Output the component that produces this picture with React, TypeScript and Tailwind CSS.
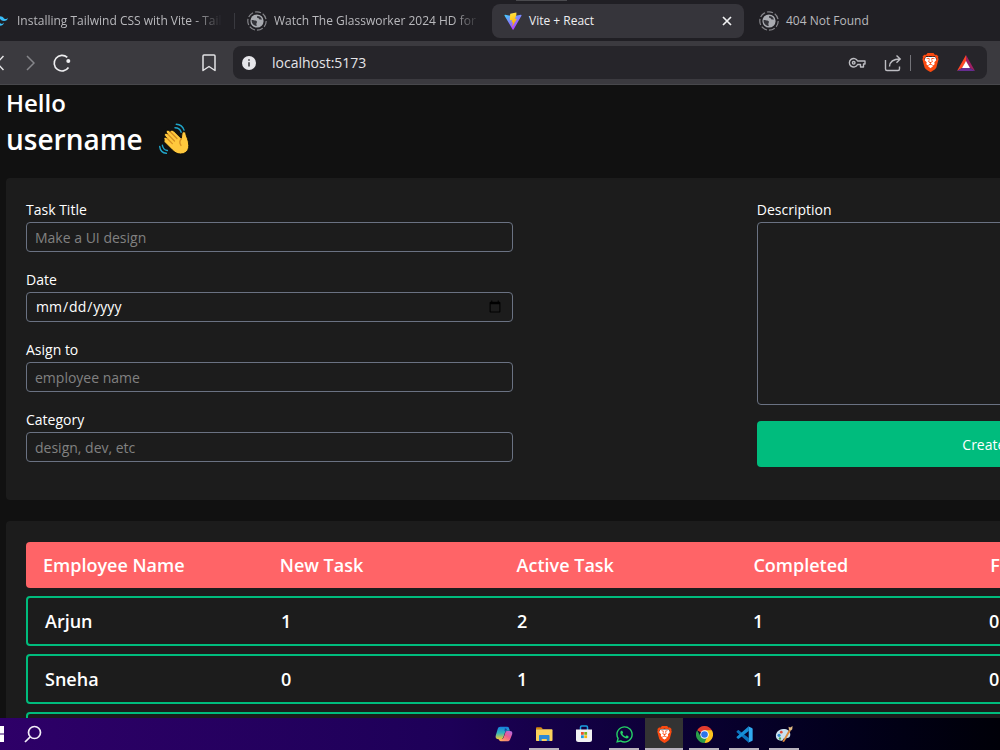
import { useState } from 'react';
import type { ReactNode } from 'react';
import { SiBrave, SiTailwindcss } from 'react-icons/si';
import { FaWhatsapp } from 'react-icons/fa';

type Employee = { name: string; newTask: number; active: number; completed: number; failed: number };

const employees: Employee[] = [
  { name: 'Arjun', newTask: 1, active: 2, completed: 1, failed: 0 },
  { name: 'Sneha', newTask: 0, active: 1, completed: 1, failed: 0 },
  { name: 'Ravi', newTask: 1, active: 1, completed: 1, failed: 0 },
];

const fieldClass = 'block h-[30px] w-full rounded border border-[#6a7282] bg-transparent px-2 text-sm text-white outline-none placeholder:text-[#818181]';

function GlobeIcon() {
  return (
    <svg viewBox="0 0 20 20" className="size-5 shrink-0" fill="none">
      <circle cx="10" cy="10" r="9.2" stroke="#85858a" strokeWidth="1.2" strokeDasharray="6.2 2" />
      <circle cx="10" cy="10" r="6.6" fill="#a9abb1" />
      <path d="M4.600 9c1.800 0 2.800.4 3.800.6 1.600.4 2 1.200 1.200 2.400-.4.800-.2 1.600.2 3-2.900 0-5.500-2.500-5.200-6zM10.500 5c-1 .8-.5 1.800.6 2 .9.2.8 1.200 1.700 1.500 1 .3 1.300-.2 2.200.2-.5-2-2.200-3.700-4.500-3.700z" fill="#34343a" />
    </svg>
  );
}

function ViteIcon() {
  return (
    <svg viewBox="0 0 32 32" className="size-[18px] shrink-0">
      <defs>
        <linearGradient id="viteBody" x1="0" y1="0" x2="0.6" y2="1">
          <stop offset="0" stopColor="#41d1ff" />
          <stop offset="1" stopColor="#bd34fe" />
        </linearGradient>
        <linearGradient id="viteBolt" x1="0" y1="0" x2="0.2" y2="1">
          <stop offset="0" stopColor="#ffea83" />
          <stop offset="0.2" stopColor="#ffdd35" />
          <stop offset="1" stopColor="#ffa800" />
        </linearGradient>
      </defs>
      <path d="M31 6.500 17 31a1 1 0 0 1-1.700 0L1 6.500A1 1 0 0 1 2 5l14 2.500L30 5a1 1 0 0 1 1 1.500z" fill="url(#viteBody)" />
      <path d="M22 1 11 3l-.7 12 4-.7-.9 4.300 2.500-.6-1.500 8.500L23 12l-3.500.6L22 5z" fill="url(#viteBolt)" />
    </svg>
  );
}

function BraveIcon({ className }: { className: string }) {
  return (
    <svg viewBox="0 0 24 24" className={className}>
      <path d="M6 5h12l2 5-2 7-6 4-6-4-2-7z" fill="#fff" />
      <SiBrave size={24} color="#fb4a10" />
    </svg>
  );
}

function WaveIcon() {
  return (
    <svg viewBox="0 0 36 36" className="size-8 shrink-0">
      <g transform="translate(-1 0)">
        <path d="M7.200 19.300c-1.900-2 .4-4.300 2.400-2.600l-1.700-1.800c-1.900-2.200.6-4.600 2.700-2.600l-.9-1c-1.700-2.200.9-4.400 2.900-2.500l1.100 1.100c.3-2.300 2.600-2.300 4.200-.7l8.300 8.300c.5-2.200.1-4.200.8-6.200.8-2.200 4-1.800 4.200.8.1 2.200 3.300 7.200 3.300 13.200 0 6.400-4.300 9.500-9.300 9.500-4 0-6.500-1.700-9.200-4.400l-8.600-8.600c-1.300-1.300-.8-2.600-.2-2.500z" fill="#ffc83d" stroke="#080808" strokeWidth="1" />
        <path d="m10 17.200 6 6M10.800 12.500l7.600 7.700M13.900 10.200l7.300 7.300M26.300 17.800c-2 2-2.300 5-.6 7.500" fill="none" stroke="#d58e21" strokeWidth="1.500" strokeLinecap="round" />
        <path d="M19 5.300c3 0 6 2 7 5M20.500 1.500c4 .3 7.500 3 8.700 6.500M4.800 25c.4 3 2.800 5.400 5.600 6M1.800 26.500c.5 4.200 3.700 7.200 7.500 7.600" fill="none" stroke="#20a5c9" strokeWidth="1.600" strokeLinecap="round" />
      </g>
    </svg>
  );
}

function CopilotIcon() {
  return (
    <svg viewBox="0 0 20 20" className="size-[18px]">
      <defs>
        <linearGradient id="coLeft" x1="0" y1="0" x2="0" y2="1">
          <stop offset="0" stopColor="#1680df" />
          <stop offset="0.5" stopColor="#32b5bc" />
          <stop offset="1" stopColor="#f2c936" />
        </linearGradient>
        <linearGradient id="coRight" x1="1" y1="0" x2="0.2" y2="1">
          <stop offset="0" stopColor="#ad6bec" />
          <stop offset="0.5" stopColor="#ee5c8b" />
          <stop offset="1" stopColor="#ffad60" />
        </linearGradient>
      </defs>
      <path d="M6 2h7.500c1.500 0 2 1 2.400 2.500l.6 2h-3c-1.500 0-2 .8-2.500 2.200l-1.700 5c-.4 1.300-1.200 2-2.600 2H3.500C1 15.700.2 14 .9 11.500L3 4.500C3.500 3 4.300 2 6 2z" fill="url(#coLeft)" />
      <path d="M14 18H6.500C5 18 4.500 17 4.100 15.600h3c1.400 0 2.200-.8 2.600-2l1.700-5c.5-1.500 1.200-2.200 2.600-2h2.600c2.500 0 3 1.700 2.400 4L17 15.500c-.5 1.600-1.400 2.500-3 2.500z" fill="url(#coRight)" />
      <path d="M11 3.500c1.500 0 2 .8 2.400 2.300l-2.800 1z" fill="#173eaa" />
    </svg>
  );
}

function FolderIcon() {
  return (
    <svg viewBox="0 0 18 18" className="size-[18px]">
      <path d="M1 3.500c0-.8.500-1.300 1.200-1.300h4l1.800 2H1z" fill="#d88b0b" />
      <path d="M1 4.200h15.500c.5 0 1 .4 1 1V15c0 .6-.5 1-1 1H2c-.6 0-1-.4-1-1z" fill="#fbd15b" />
      <path d="M4 16v-5c0-.6.400-1 1-1h8.500c.6 0 1 .4 1 1v5h-2.700v-2H6.700v2z" fill="#2b8ad4" />
    </svg>
  );
}

function StoreIcon() {
  return (
    <svg viewBox="0 0 18 18" className="size-[18px]">
      <path d="M5.500 5V2.200c0-.7.400-1.200 1.200-1.200h4.600c.8 0 1.200.5 1.200 1.200V5" fill="none" stroke="#1ba0e1" strokeWidth="1.500" />
      <path d="M1 4.500h16v10c0 1.700-.8 2.500-2.500 2.500h-11C1.800 17 1 16.200 1 14.500z" fill="#f1f1f3" />
      <path d="M6 7h2.800v2.800H6z" fill="#e9512d" />
      <path d="M9.300 7h2.800v2.800H9.300z" fill="#7ab51d" />
      <path d="M6 10.300h2.800v2.800H6z" fill="#1c9be0" />
      <path d="M9.300 10.300h2.800v2.800H9.300z" fill="#f7b70b" />
    </svg>
  );
}

function ChromeIcon() {
  return (
    <svg viewBox="0 0 24 24" className="size-[17px]">
      <path d="M12 12 1.600 6A12 12 0 0 1 22.400 6z" fill="#e33b2e" />
      <path d="M12 12 22.400 6A12 12 0 0 1 12 24l-1-6z" fill="#fcc31e" />
      <path d="M12 24A12 12 0 0 1 1.600 6l5.200 9L15 17z" fill="#2a9e49" />
      <path d="M12 6h10.400l-5.200 9z" fill="#fcc31e" />
      <circle cx="12" cy="12" r="6" fill="#fff" />
      <circle cx="12" cy="12" r="4.700" fill="#2c73e8" />
    </svg>
  );
}

function CodeIcon() {
  return (
    <svg viewBox="0 0 24 24" className="size-[17px]">
      <path d="M1 7.500 2.600 6c.4-.3.900-.3 1.300 0L18 17v6.500L1 8.700c-.4-.4-.4-.9 0-1.200z" fill="#0a72bd" />
      <path d="M1 16.500 2.600 18c.4.3.9.300 1.300 0L18 7V.5L1 15.300c-.4.4-.4.900 0 1.200z" fill="#178fd6" />
      <path d="m17 .3 5.500 2.500c.6.300 1 .9 1 1.600v15.200c0 .7-.4 1.300-1 1.600L17 23.700c.6-.4 1-.8 1-1.700V2c0-.9-.4-1.300-1-1.700z" fill="#30aaf0" />
    </svg>
  );
}

function PaintIcon() {
  return (
    <svg viewBox="0 0 20 20" className="size-[18px]">
      <path d="M9 4.500C4 5 1 8.500 1 12c0 3 2 5.500 6 5.500 2.500 0 1.500-2.500 3.500-2.800 2.500-.3 6.500.3 6.500-4.200 0-4-4-6.300-8-6z" fill="#c9e0ee" />
      <circle cx="4.500" cy="11.500" r="1.700" fill="#2f88cd" />
      <circle cx="7" cy="8" r="1.500" fill="#df4b36" />
      <circle cx="5.500" cy="15" r="1.300" fill="#4ca64d" />
      <path d="m8.500 17.800 7-12.500 2 1-7 12c-1 1-2.500.5-2-.5z" fill="#d9883b" />
      <path d="M15.500 5.300 15 2l2 .8L19.500 1l-.3 3.700-1.700 1.600z" fill="#e4bd83" />
    </svg>
  );
}

function Tab({ icon, title, fade }: { icon: ReactNode; title: string; fade?: boolean }) {
  return (
    <button className={`flex min-w-0 flex-1 items-center gap-[7px] overflow-hidden text-left ${fade ? '[mask-image:linear-gradient(to_right,black_88%,transparent)]' : ''}`}>
      {icon}
      <span className="whitespace-nowrap">{title}</span>
    </button>
  );
}

function TabStrip() {
  return (
    <div className="flex h-[41px] shrink-0 items-center overflow-hidden bg-[#201f24] text-xs text-[#b9b9bd]">
      <div className="-ml-2 flex w-[230px] shrink-0">
        <Tab icon={<SiTailwindcss className="mr-0.5 size-4 shrink-0 text-[#38bdf8]" />} title="Installing Tailwind CSS with Vite - Tailwind CSS" fade />
      </div>
      <div className="ml-3 h-4 w-px shrink-0 bg-[#39393f]" />
      <div className="ml-3 flex w-[233px] shrink-0">
        <Tab icon={<GlobeIcon />} title="Watch The Glassworker 2024 HD for free" fade />
      </div>
      <div className="ml-3 flex h-full w-[252px] shrink-0 flex-col">
        <div className="ml-6 h-px w-[51px] bg-[#4a4a4e]" />
        <div className="mt-[3px] flex h-[34px] items-center rounded-lg bg-[#36353b] pr-[9px] pl-3 text-[#eeeef0]">
          <Tab icon={<ViteIcon />} title="Vite + React" />
          <button aria-label="Close tab" className="flex size-4 items-center justify-center">
            <svg viewBox="0 0 10 10" className="size-[10px]" stroke="#f0f0f2" strokeWidth="1.700">
              <path d="m1 1 8 8M9 1 1 9" />
            </svg>
          </button>
        </div>
      </div>
      <div className="ml-[15px] flex min-w-0 flex-1">
        <Tab icon={<GlobeIcon />} title="404 Not Found" />
      </div>
    </div>
  );
}

function Toolbar() {
  return (
    <div className="flex h-11 shrink-0 items-center overflow-hidden border-b border-[#48484c] bg-[#3b3a3f] pr-[13px]">
      <button aria-label="Back" className="-ml-1 w-2">
        <svg viewBox="0 0 8 16" className="h-4 w-2" fill="none" stroke="#e8e8ea" strokeWidth="1.500">
          <path d="M7.500 1 1 8l6.500 7" />
        </svg>
      </button>
      <button aria-label="Forward" className="ml-[22px]">
        <svg viewBox="0 0 9 16" className="h-4 w-[9px]" fill="none" stroke="#86868b" strokeWidth="1.500">
          <path d="m1 1 7 7-7 7" />
        </svg>
      </button>
      <button aria-label="Reload" className="ml-[17px]">
        <svg viewBox="0 0 20 20" className="size-5" fill="none" stroke="#eeeef0" strokeWidth="1.600">
          <path d="M15.300 4.400A7.800 7.800 0 1 0 16.500 14.500" />
          <circle cx="16.300" cy="8" r="2" fill="#eeeef0" stroke="none" />
        </svg>
      </button>
      <button aria-label="Bookmark" className="ml-[130px]">
        <svg viewBox="0 0 14 18" className="h-[18px] w-[14px]" fill="none" stroke="#e2e2e5" strokeWidth="1.500">
          <path d="M2 1h10c.6 0 1 .4 1 1v14.500l-6-4-6 4V2c0-.6.400-1 1-1z" strokeLinejoin="round" />
        </svg>
      </button>
      <div className="ml-[17px] flex h-[33px] min-w-0 flex-1 items-center rounded-lg bg-[#26252a] pr-3 pl-[9px]">
        <svg viewBox="0 0 16 16" className="size-[14px] shrink-0">
          <circle cx="8" cy="8" r="8" fill="#e6e6ea" />
          <path d="M8 3.800v1.700M8 7v5" stroke="#26252a" strokeWidth="1.600" />
        </svg>
        <input aria-label="Address" defaultValue="localhost:5173" className="ml-4 min-w-0 flex-1 bg-transparent text-sm text-[#e4e4e8] outline-none" />
        <button aria-label="Passwords">
          <svg viewBox="0 0 18 12" className="h-3 w-[18px]" fill="none" stroke="#bdbdc2" strokeWidth="1.400">
            <path d="M9.600 4h7.400v3h-1.500v3h-3V7.500H9.600A4.300 4.300 0 1 1 9.600 4z" strokeLinejoin="round" />
            <circle cx="5.700" cy="5.800" r="1.300" />
          </svg>
        </button>
        <button aria-label="Share" className="ml-[18px]">
          <svg viewBox="0 0 18 18" className="size-[18px]" fill="none" stroke="#bdbdc2" strokeWidth="1.400">
            <path d="M1.500 6v9c0 1 .5 1.500 1.500 1.500h11c1 0 1.500-.5 1.500-1.500v-2.500M5.500 12.500c.3-4.500 3.500-7.500 10.500-7.500M12.500 1.500 16.200 5l-3.700 3.700" />
          </svg>
        </button>
        <div className="mx-2 h-4 w-px bg-[#747479]" />
        <button aria-label="Brave Shields" className="ml-0.5">
          <BraveIcon className="size-[19px]" />
        </button>
        <button aria-label="Brave Rewards" className="ml-[17px]">
          <svg viewBox="0 0 18 16" className="h-4 w-[18px]">
            <path d="M9 0 0 16l5-3 4-6.500z" fill="#ff4724" />
            <path d="m9 0 9 16-5-3-4-6.500z" fill="#9e1f63" />
            <path d="M0 16h18l-5-3H5z" fill="#662d91" />
            <path d="m9 6 4 7H5z" fill="#fff" />
          </svg>
        </button>
      </div>
    </div>
  );
}

function CreateTask() {
  const [title, setTitle] = useState('');
  const [assignee, setAssignee] = useState('');
  const [category, setCategory] = useState('');

  return (
    <form onSubmit={(e) => e.preventDefault()} className="mt-[21px] flex justify-between rounded bg-[#1c1c1c] px-5 pt-5 pb-[22px]">
      <div className="w-2/5">
        <div className="mb-4">
          <label htmlFor="title" className="block">Task Title</label>
          <input id="title" value={title} onChange={(e) => setTitle(e.target.value)} placeholder="Make a UI design" className={fieldClass} />
        </div>
        <div className="mb-4">
          <label htmlFor="date" className="block">Date</label>
          <input id="date" type="date" className={fieldClass} />
        </div>
        <div className="mb-4">
          <label htmlFor="assignee" className="block">Asign to</label>
          <input id="assignee" value={assignee} onChange={(e) => setAssignee(e.target.value)} placeholder="employee name" className={fieldClass} />
        </div>
        <div className="mb-4">
          <label htmlFor="category" className="block">Category</label>
          <input id="category" value={category} onChange={(e) => setCategory(e.target.value)} placeholder="design, dev, etc" className={fieldClass} />
        </div>
      </div>
      <div className="w-2/5">
        <label htmlFor="description" className="block">Description</label>
        <textarea id="description" className="block h-[183px] w-full resize-none rounded border border-[#6a7282] bg-transparent px-2 py-1 outline-none" />
        <button type="submit" className="mt-4 block h-[46px] w-full rounded bg-[#00bc7d] pt-0.5">Create Task</button>
      </div>
    </form>
  );
}

function AllTasks() {
  return (
    <div className="mt-[21px] rounded bg-[#1c1c1c] px-5 py-[21px]">
      <table className="block text-left text-[18px] leading-7 font-semibold">
        <thead className="block">
          <tr className="mb-2 grid grid-cols-5 rounded bg-[#ff6467] px-[17px] py-[9px]">
            <th className="font-semibold">Employee Name</th>
            <th className="font-semibold">New Task</th>
            <th className="font-semibold">Active Task</th>
            <th className="font-semibold">Completed</th>
            <th className="font-semibold">Failed</th>
          </tr>
        </thead>
        <tbody className="block">
          {employees.map((employee) => (
            <tr key={employee.name} className="mb-2 grid grid-cols-5 rounded border-2 border-[#00bc7d] px-[17px] py-[9px]">
              <td>{employee.name}</td>
              <td>{employee.newTask}</td>
              <td>{employee.active}</td>
              <td>{employee.completed}</td>
              <td>{employee.failed}</td>
            </tr>
          ))}
        </tbody>
      </table>
    </div>
  );
}

function TaskButton({ label, open, active, children }: { label: string; open?: boolean; active?: boolean; children: ReactNode }) {
  return (
    <button aria-label={label} className={`flex w-[38px] flex-col items-center justify-between ${active ? 'bg-[#333333]' : ''}`}>
      <span className="flex h-[30px] items-center pt-0.5">{children}</span>
      {open && <span className={`h-0.5 bg-[#b9b3bd] ${active ? 'w-full' : 'w-[30px]'}`} />}
    </button>
  );
}

function Taskbar() {
  return (
    <div className="flex h-8 shrink-0 overflow-hidden bg-linear-to-r from-[#2e0068] via-[#1d0058] via-45% to-[#000008]">
      <button aria-label="Start" className="-ml-3 flex w-4 items-center">
        <svg viewBox="0 0 16 16" className="size-4" fill="#fff">
          <path d="M0 0h7.500v7.500H0zM8.500 0H16v7.500H8.500zM0 8.500h7.500V16H0zM8.500 8.500H16V16H8.500z" />
        </svg>
      </button>
      <button aria-label="Search" className="ml-5 flex items-center">
        <svg viewBox="0 0 18 18" className="size-[18px]" fill="none" stroke="#f2edf7" strokeWidth="1.700">
          <circle cx="10.500" cy="7.500" r="6" />
          <path d="M6.200 11.800 1 17" />
        </svg>
      </button>
      <div className="ml-auto flex w-[515px] gap-[2px]">
        <TaskButton label="Copilot"><CopilotIcon /></TaskButton>
        <TaskButton label="File Explorer" open><FolderIcon /></TaskButton>
        <TaskButton label="Microsoft Store"><StoreIcon /></TaskButton>
        <TaskButton label="WhatsApp" open><FaWhatsapp className="size-[19px] text-[#25d366]" /></TaskButton>
        <TaskButton label="Brave" open active><BraveIcon className="size-[17px]" /></TaskButton>
        <TaskButton label="Chrome" open><ChromeIcon /></TaskButton>
        <TaskButton label="Visual Studio Code" open><CodeIcon /></TaskButton>
        <TaskButton label="Paint" open><PaintIcon /></TaskButton>
      </div>
    </div>
  );
}

export default function App() {
  return (
    <div className="flex h-screen flex-col overflow-hidden bg-[#111111] font-['Open_Sans','Noto_Sans',sans-serif]">
      <TabStrip />
      <Toolbar />
      <main className="min-h-0 flex-1 overflow-hidden text-white">
        <div className="w-[127%] px-1.5 text-sm leading-6">
          <h1 className="text-2xl leading-9 font-semibold">
            Hello
            <br />
            <span className="flex items-center gap-4 text-[28px]">username <WaveIcon /></span>
          </h1>
          <CreateTask />
          <AllTasks />
        </div>
      </main>
      <Taskbar />
    </div>
  );
}
